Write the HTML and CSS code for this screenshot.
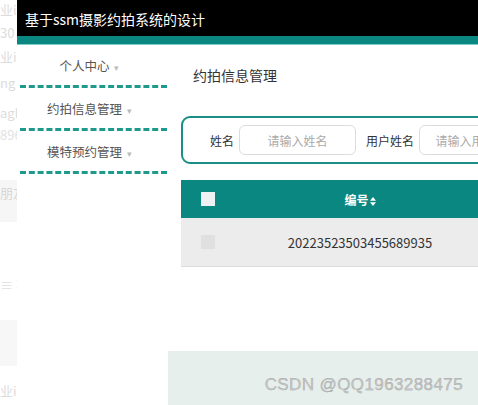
FILE: index.html
```html
<!DOCTYPE html>
<html lang="zh-CN">
<head>
    <meta charset="UTF-8">
    <meta name="viewport" content="width=device-width, initial-scale=1.0">
    <title>基于ssm摄影约拍系统的设计</title>
    <link rel="stylesheet" href="styles.css">
</head>
<body>
    <div class="page">
        <div class="ghost">
            <span class="g1">业i</span>
            <span class="g2">30</span>
            <span class="g3">业i</span>
            <span class="g4">ng</span>
            <span class="g5">agb</span>
            <span class="g6">896</span>
            <div class="gbox"><span>朋友</span></div>
            <span class="g7">≡ 不</span>
            <div class="gbox2"></div>
            <span class="g8">业i</span>
        </div>
        <div class="app">
            <div class="topbar">基于ssm摄影约拍系统的设计</div>
            <div class="topline"></div>
            <div class="body">
                <div class="sidebar">
                    <div class="menu-item">个人中心 <span class="caret">▾</span></div>
                    <div class="menu-item">约拍信息管理 <span class="caret">▾</span></div>
                    <div class="menu-item">模特预约管理 <span class="caret">▾</span></div>
                </div>
                <div class="main">
                    <h2 class="page-title">约拍信息管理</h2>
                    <div class="search-box">
                        <label class="field-label">姓名</label>
                        <input class="field-input" type="text" placeholder="请输入姓名">
                        <label class="field-label">用户姓名</label>
                        <input class="field-input" type="text" placeholder="请输入用户姓名">
                    </div>
                    <table class="data-table">
                        <thead>
                            <tr>
                                <th class="col-check"><span class="check head-check"></span></th>
                                <th class="col-id">编号<svg class="sort" width="6" height="9" viewBox="0 0 6 9"><path d="M3 0 L6 3.8 H0 Z M0 5.2 H6 L3 9 Z" fill="#fff"/></svg></th>
                            </tr>
                        </thead>
                        <tbody>
                            <tr>
                                <td class="col-check"><span class="check"></span></td>
                                <td class="col-id">20223523503455689935</td>
                            </tr>
                        </tbody>
                    </table>
                    <div class="footer">
                        <span class="watermark">CSDN @QQ1963288475</span>
                    </div>
                </div>
            </div>
        </div>
    </div>
</body>
</html>
```

FILE: styles.css
```css
html, body {
    margin: 0;
    padding: 0;
    height: 100%;
    overflow: hidden;
    background: #fff;
}
body {
    font-family: "Noto Sans CJK SC", "Liberation Sans", sans-serif;
    color: #333;
}
.page {
    display: flex;
    height: 405px;
}

/* faint page showing through on the left */
.ghost {
    width: 17px;
    flex-shrink: 0;
    overflow: hidden;
    display: flex;
    flex-direction: column;
    font-size: 13px;
    color: #dcdcdc;
    white-space: nowrap;
}
.ghost span {
    display: block;
    height: 26px;
    line-height: 26px;
}
.ghost .g1 { height: 20px; line-height: 20px; }
.ghost .g2 { height: 24px; }
.ghost .g5 { margin-top: 4px; height: 22px; }
.ghost .g6 { height: 24px; color: #e2e2e2; }
.gbox {
    margin-top: 34px;
    height: 42px;
    line-height: 42px;
    background: #f6f6f6;
    color: #d6d6d6;
}
.ghost .g7 {
    margin-top: 50px;
    height: 30px;
    color: #e0e0e0;
}
.gbox2 {
    margin-top: 18px;
    height: 46px;
    background: #f7f7f7;
}
.ghost .g8 {
    margin-top: 12px;
}

.app {
    flex: 1;
    display: flex;
    flex-direction: column;
    min-width: 0;
}
.topbar {
    height: 36px;
    line-height: 38px;
    background: #000;
    color: #fff;
    font-size: 14px;
    padding-left: 8px;
}
.topline {
    height: 8px;
    background: #0b8782;
    border-bottom: 1px solid #7ccfc8;
}
.body {
    flex: 1;
    display: flex;
    min-height: 0;
}
.sidebar {
    width: 151px;
    flex-shrink: 0;
}
.menu-item {
    height: 40px;
    line-height: 42px;
    margin: 0 1px 0 3px;
    padding-right: 8px;
    text-align: center;
    font-size: 12.5px;
    color: #555;
    border-bottom: 3px dashed #1d9a8c;
}
.caret {
    font-size: 9px;
    color: #bbb;
    margin-left: 2px;
}

.main {
    flex: 1;
    display: flex;
    flex-direction: column;
    align-items: flex-start;
    padding-left: 13px;
    min-width: 0;
}
.page-title {
    margin: 19px 0 0 12px;
    font-size: 14px;
    font-weight: normal;
    line-height: 22px;
    color: #333;
}
.search-box {
    margin-top: 30px;
    height: 44px;
    width: 340px;
    border: 2px solid #1a8f86;
    border-radius: 9px;
    display: flex;
    align-items: center;
    padding-left: 27px;
    gap: 5px;
    flex-shrink: 0;
}
.field-label {
    font-size: 12px;
    color: #333;
}
.field-input {
    width: 117px;
    height: 30px;
    box-sizing: border-box;
    border: 1px solid #dcdcdc;
    border-radius: 6px;
    text-align: center;
    font-family: inherit;
    font-size: 12px;
    margin-right: 5px;
    outline: none;
}
.field-input::placeholder {
    color: #aaa;
}

.data-table {
    margin-top: 16px;
    border-collapse: collapse;
    table-layout: fixed;
    width: 299px;
    flex-shrink: 0;
}
.data-table th {
    height: 38px;
    background: #0b8782;
    color: #fff;
    font-size: 12px;
    font-weight: bold;
    padding: 0;
}
.data-table td {
    height: 48px;
    background: #ececec;
    font-size: 13px;
    color: #333;
    padding: 0;
    border-bottom: 1px solid #ddd;
}
.col-check {
    width: 59px;
    text-align: left;
}
.col-id {
    width: 240px;
    text-align: center;
}
.check {
    display: block;
    width: 14px;
    height: 14px;
    margin-left: 20px;
    background: #e0e0e0;
}
.head-check {
    background: #eef1f4;
}
.sort {
    margin-left: 1px;
    vertical-align: -1px;
}

.footer {
    align-self: stretch;
    margin: 84px 0 0 -13px;
    height: 60px;
    background: #e6efec;
    display: flex;
    justify-content: flex-end;
    align-items: center;
    padding-right: 15px;
}
.watermark {
    font-family: "Liberation Sans", sans-serif;
    font-size: 17px;
    letter-spacing: 0.4px;
    color: #c8c8c8;
    -webkit-text-stroke: 0.25px #888;
    padding-top: 14px;
}
```
